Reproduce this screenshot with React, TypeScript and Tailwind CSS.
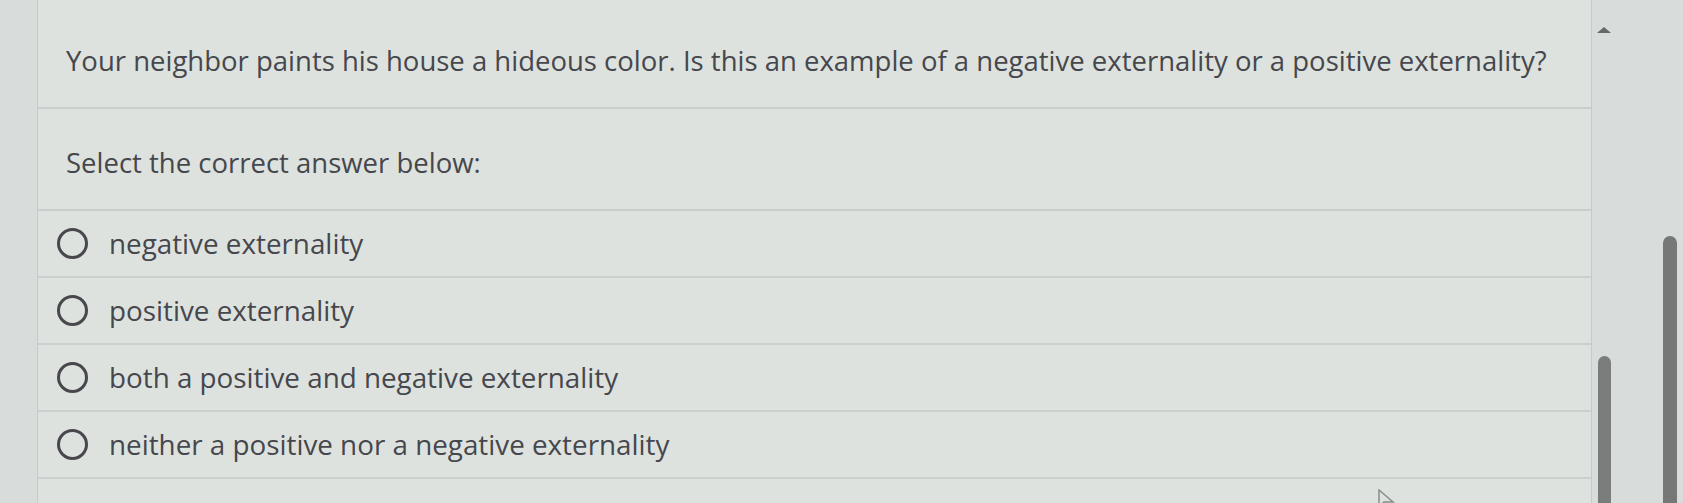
import React from "react";

const options = [
  "negative externality",
  "positive externality",
  "both a positive and negative externality",
  "neither a positive nor a negative externality",
];

function Radio() {
  return <span className="block h-[31px] w-[31px] shrink-0 rounded-full border-[3px] border-[#47474c]" />;
}

export default function App() {
  return (
    <div className="relative flex h-[503px] w-[1683px] overflow-hidden bg-[#d8dddb] font-['Open_Sans',sans-serif] text-[#46474c]">
      <div className="w-[37px] shrink-0" />

      <div className="w-[1555px] shrink-0 border-x border-[#c6cac8] bg-[#dde2df]">
        <div className="h-[109px] border-b-2 border-[#c9cdcb] pl-[28px] pt-[42px] text-[27.5px] leading-[38px]">
          Your neighbor paints his house a hideous color. Is this an example of a negative externality or a positive externality?
        </div>
        <div className="h-[102px] border-b-2 border-[#c9cdcb] pl-[28px] pt-[35px] text-[27.5px] leading-[38px]">
          Select the correct answer below:
        </div>
        {options.map((o) => (
          <div key={o} className="flex h-[67px] items-center gap-[21px] border-b-2 border-[#cbcfcd] pl-[19px] text-[27.8px]">
            <Radio />
            <span>{o}</span>
          </div>
        ))}
      </div>

      <div className="flex flex-1 pl-[5px]">
        <div className="flex w-[14px] flex-col items-center">
          <div className="mt-[27px] h-0 w-0 border-x-[7px] border-b-[6px] border-x-transparent border-b-[#66686a]" />
          <div className="mt-[323px] w-[13px] flex-1 rounded-t-full bg-[#7b7d7d]" />
        </div>
        <div className="ml-[52px] flex w-[14px] flex-col">
          <div className="mt-[236px] flex-1 rounded-t-full bg-[#767878]" />
        </div>
      </div>

      {/* mouse cursor */}
      <svg className="absolute left-[1378px] top-[489px]" width="20" height="20" viewBox="0 0 20 20">
        <path d="M1 1 L1 18 L6 13 L15 13 Z" fill="none" stroke="#8a8c8c" strokeWidth="1.5" />
      </svg>
    </div>
  );
}
